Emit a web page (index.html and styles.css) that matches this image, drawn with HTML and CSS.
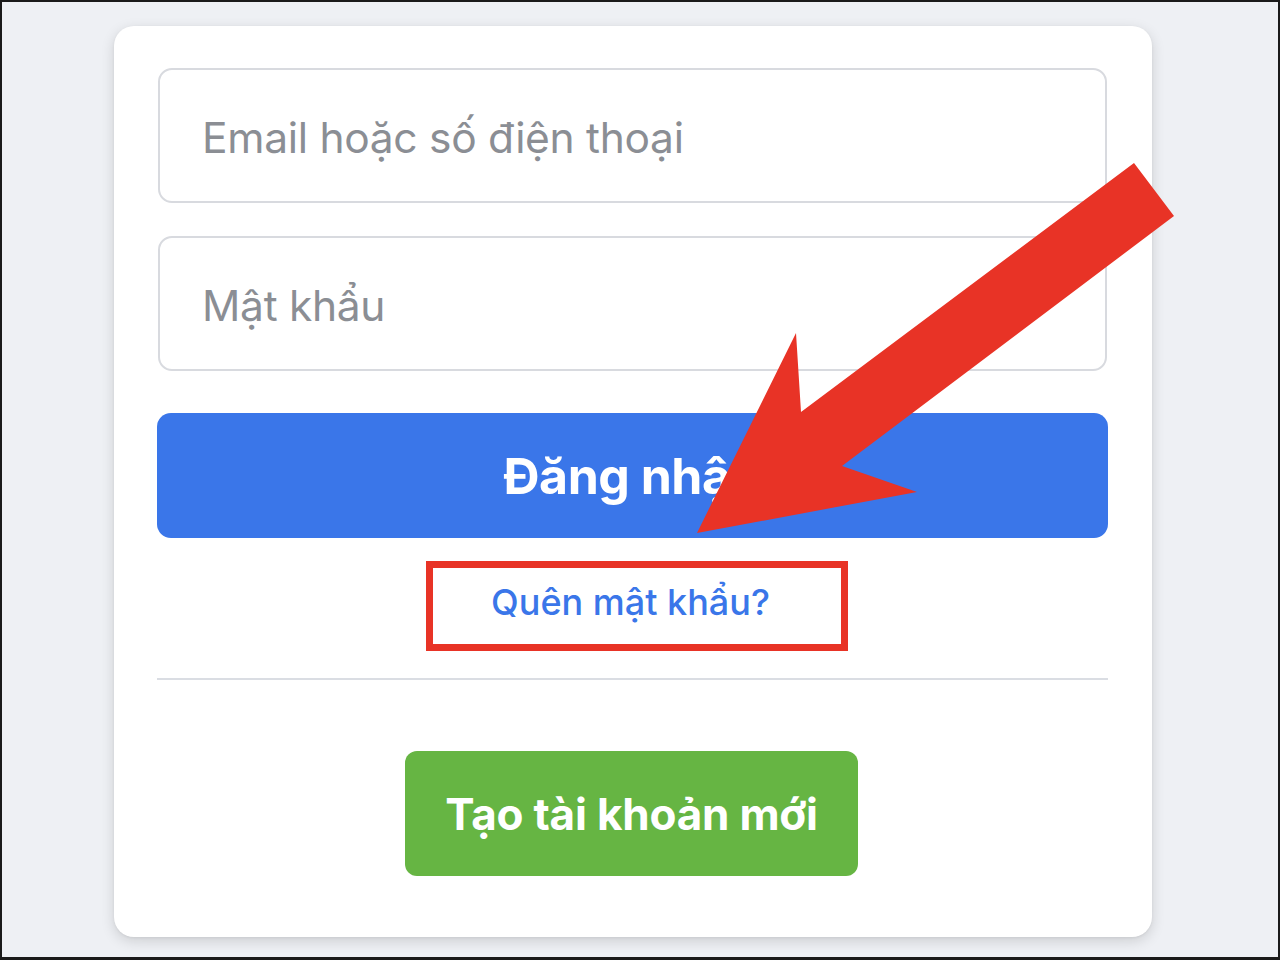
FILE: index.html
```html
<!DOCTYPE html>
<html lang="vi">
<head>
<meta charset="utf-8">
<title>Đăng nhập</title>
<link rel="stylesheet" href="styles.css">
</head>
<body>
<div class="frame">
  <div class="card">
    <div class="field"><span class="placeholder">Email hoặc số điện thoại</span></div>
    <div class="field field-pass"><span class="placeholder">Mật khẩu</span></div>
    <div class="btn-login">Đăng nhập</div>
    <div class="forgot-row">
      <div class="forgot">
        <a class="forgot-link">Quên mật khẩu?</a>
        <span class="highlight"></span>
      </div>
    </div>
    <div class="divider"></div>
    <div class="create-row">
      <div class="btn-create">Tạo tài khoản mới</div>
    </div>
  </div>
  <svg class="arrow" width="1280" height="960" viewBox="0 0 1280 960">
    <polygon points="1134,163 1174,216 842,466 917,492 697,533 796,333 801,412" fill="#e83326"/>
  </svg>
</div>
</body>
</html>
```
FILE: styles.css
```css
html, body {
  margin: 0;
  padding: 0;
}
body {
  font-family: Inter, "Noto Sans", Roboto, sans-serif;
}
.frame {
  position: relative;
  width: 1280px;
  height: 960px;
  box-sizing: border-box;
  border: 2px solid #1a1a1a;
  border-bottom-width: 3px;
  background: #eef0f4;
  padding-top: 24px;
  overflow: hidden;
}
.card {
  margin-left: 112px;
  width: 1038px;
  height: 911px;
  box-sizing: border-box;
  background: #ffffff;
  border-radius: 20px;
  box-shadow: 0 4px 14px rgba(0, 0, 0, 0.14), 0 1px 3px rgba(0, 0, 0, 0.06);
  padding: 42px 45px 0 44px;
  display: flex;
  flex-direction: column;
}
.field {
  height: 135px;
  box-sizing: border-box;
  border: 2px solid #d8dadf;
  border-radius: 14px;
  display: flex;
  align-items: center;
  padding-left: 42px;
  margin-bottom: 33px;
}
.field-pass {
  margin-bottom: 42px;
}
.placeholder {
  font-size: 42.5px;
  color: #8b8e94;
  letter-spacing: -0.3px;
  margin-top: 4px;
}
.btn-login {
  height: 125px;
  margin: 0 -1px;
  background: #3a76e9;
  border-radius: 14px;
  color: #ffffff;
  font-weight: 700;
  font-size: 50px;
  display: flex;
  align-items: center;
  justify-content: center;
  letter-spacing: -0.5px;
}
.forgot-row {
  display: flex;
  justify-content: center;
  margin-top: 23px;
  padding-left: 8px;
}
.forgot {
  position: relative;
  width: 422px;
  height: 90px;
  display: flex;
  align-items: center;
  justify-content: center;
}
.forgot-link {
  color: #3a76e9;
  font-size: 36px;
  font-weight: 500;
  margin-top: -8px;
  margin-left: -12px;
}
.highlight {
  position: absolute;
  inset: 0;
  border: 7px solid #e83326;
}
.divider {
  margin: 27px -1px 0;
  height: 2px;
  background: #dadde3;
}
.create-row {
  display: flex;
  justify-content: center;
  margin-top: 71px;
}
.btn-create {
  width: 453px;
  height: 125px;
  box-sizing: border-box;
  margin-left: -2px;
  background: #66b543;
  border-radius: 12px;
  color: #ffffff;
  font-weight: 700;
  font-size: 44px;
  display: flex;
  align-items: center;
  justify-content: center;
  letter-spacing: -0.2px;
}
.arrow {
  position: absolute;
  left: -2px;
  top: -2px;
}
```
